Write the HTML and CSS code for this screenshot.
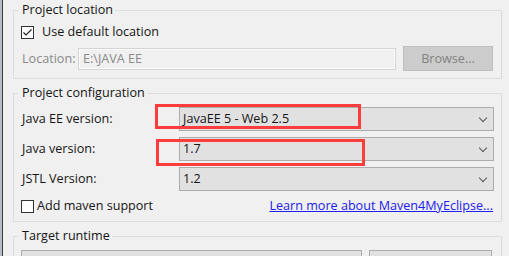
FILE: index.html
```html
<!DOCTYPE html>
<html lang="en">

<head>
  <meta charset="UTF-8" />
  <title>New Web Project</title>
  <link rel="stylesheet" href="styles.css">
</head>

<body>
  <div class="frame">
    <div class="edge"></div>
    <div class="main">

      <fieldset class="group">
        <legend>Project location</legend>
        <label class="check">
          <span class="box">
            <svg width="11" height="11" viewBox="0 0 11 11">
              <polyline points="1.5,5.5 4,8 9.5,2.5" fill="none" stroke="#222" stroke-width="1.2" />
            </svg>
          </span>
          <span class="check-text">Use default location</span>
        </label>
        <div class="loc-row">
          <span class="dim loc-label">Location:</span>
          <div class="field dim">E:\JAVA EE</div>
          <button class="btn" disabled>Browse...</button>
        </div>
      </fieldset>

      <fieldset class="group">
        <legend>Project configuration</legend>
        <div class="rows">
          <div class="row">
            <span class="row-label">Java EE version:</span>
            <div class="combo">JavaEE 5 - Web 2.5<span class="chev"></span></div>
            <!-- annotation -->
            <div class="mark mark-ee"></div>
          </div>
          <div class="row">
            <span class="row-label">Java version:</span>
            <div class="combo">1.7<span class="chev"></span></div>
            <div class="mark mark-java"></div>
          </div>
          <div class="row">
            <span class="row-label">JSTL Version:</span>
            <div class="combo">1.2<span class="chev"></span></div>
          </div>
        </div>
        <div class="maven-row">
          <label class="check">
            <span class="box"></span>
            <span>Add maven support</span>
          </label>
          <a class="link" href="#">Learn more about Maven4MyEclipse...</a>
        </div>
      </fieldset>

      <fieldset class="group">
        <legend>Target runtime</legend>
        <div class="runtime-row">
          <div class="combo runtime-combo"></div>
          <div class="combo runtime-btn"></div>
        </div>
      </fieldset>

    </div>
  </div>
</body>

</html>
```

FILE: styles.css
```css
* {
  box-sizing: border-box;
}

html,
body {
  margin: 0;
  height: 100%;
  overflow: hidden;
}

body {
  background: #f0f0f0;
  color: #151515;
  font-family: "Open Sans", "Liberation Sans", sans-serif;
  font-size: 12.6px;
  line-height: 16px;
}

.frame {
  display: flex;
  height: 100%;
}

.edge {
  width: 3px;
  flex: none;
  background: #b7bcc6;
  border-right: 1px solid #3c3c3c;
}

.main {
  flex: 1;
  padding-top: 2px;
}

/* group boxes */
.group {
  margin: 0 7px 6px 10px;
  padding: 6px 7px 7px 7px;
  border: 1px solid #dcdcdc;
  min-width: 0;
}

.group legend {
  padding: 0 2px 0 4px;
  margin-left: -3px;
  line-height: 16px;
}

.check {
  display: flex;
  align-items: center;
  height: 16px;
}

.box {
  width: 13px;
  height: 13px;
  border: 1px solid #333;
  background: #fff;
  display: flex;
  align-items: center;
  justify-content: center;
  flex: none;
}

.check-text {
  margin-left: 8px;
}

.check .box + span:not(.check-text) {
  margin-left: 3px;
}

.dim {
  color: #8a8a8a;
}

.loc-row {
  display: flex;
  align-items: center;
  gap: 6px;
  margin-top: 6px;
  height: 25px;
  padding-right: 1px;
}

.loc-label {
  width: 50px;
  margin-left: 1px;
}

.field {
  flex: 1;
  height: 22px;
  border: 1px solid #d4d4d4;
  box-shadow: inset 0 0 0 1px #fafafa;
  padding: 2px 4px;
  margin-right: 1px;
}

.btn {
  width: 90px;
  height: 25px;
  background: #cccccc;
  border: 1px solid #bfbfbf;
  color: #838383;
  font: inherit;
  padding: 0;
}

/* configuration rows */
.rows {
  display: flex;
  flex-direction: column;
  gap: 6px;
}

.row {
  position: relative;
  display: flex;
  align-items: center;
}

.row-label {
  width: 157px;
  margin-left: 1px;
  flex: none;
}

.combo {
  position: relative;
  flex: 1;
  height: 24px;
  background: #e1e1e1;
  border: 1px solid #adadad;
  padding: 3px 3px;
}

.chev {
  position: absolute;
  right: 7px;
  top: 7px;
  width: 6px;
  height: 6px;
  border-right: 1px solid #555;
  border-bottom: 1px solid #555;
  transform: rotate(45deg);
}

.mark {
  position: absolute;
  border: 3px solid #fd3c3c;
}

.mark-ee {
  left: 134px;
  top: -3px;
  width: 206px;
  height: 25px;
}

.mark-java {
  left: 135px;
  top: 2px;
  width: 209px;
  height: 27px;
}

.maven-row {
  display: flex;
  justify-content: space-between;
  align-items: center;
  margin-top: 7px;
  padding-right: 1px;
}

.link {
  color: #2020ee;
}

.runtime-row {
  display: flex;
  gap: 7px;
}

.runtime-combo {
  flex: none;
  width: 341px;
}

.runtime-btn {
  margin-right: 2px;
}
```
